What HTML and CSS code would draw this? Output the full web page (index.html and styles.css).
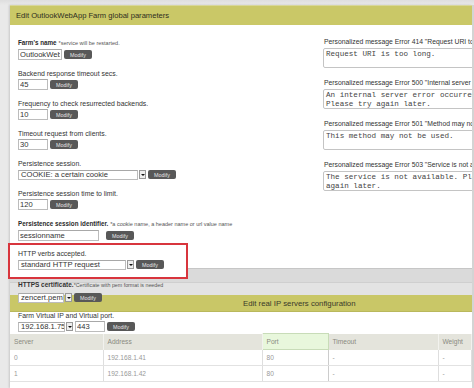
FILE: index.html
```html
<!DOCTYPE html>
<html lang="en">
<head>
  <meta charset="UTF-8" />
  <title>Farm global parameters</title>
  <link rel="stylesheet" href="styles.css">
</head>
<body>
  <div class="screen">
    <div class="panel">
      <div class="panel-head">Edit OutlookWebApp Farm global parameters</div>

      <div class="panel-body">
        <div class="col-left">
          <div class="field">
            <label><b>Farm's name</b> <small>*service will be restarted.</small></label>
            <div class="row"><input class="w44" value="OutlookWebApp"><button>Modify</button></div>
          </div>
          <div class="field">
            <label>Backend response timeout secs.</label>
            <div class="row"><input class="w30" value="45"><button>Modify</button></div>
          </div>
          <div class="field">
            <label>Frequency to check resurrected backends.</label>
            <div class="row"><input class="w30" value="10"><button>Modify</button></div>
          </div>
          <div class="field">
            <label>Timeout request from clients.</label>
            <div class="row"><input class="w30" value="30"><button>Modify</button></div>
          </div>
          <div class="field">
            <label>Persistence session.</label>
            <div class="row">
              <span class="select w120">COOKIE: a certain cookie</span><span class="arrow"></span>
              <button>Modify</button>
            </div>
          </div>
          <div class="field">
            <label>Persistence session time to limit.</label>
            <div class="row"><input class="w30" value="120"><button>Modify</button></div>
          </div>
          <div class="field">
            <label><b>Persistence session identifier.</b> <small>*a cookie name, a header name or url value name</small></label>
            <div class="row"><input class="w81" value="sessionname"><button class="ml7">Modify</button></div>
          </div>
          <div class="field highlight">
            <label>HTTP verbs accepted.</label>
            <div class="row">
              <span class="select w108">standard HTTP request</span><span class="arrow"></span>
              <button>Modify</button>
            </div>
          </div>
        </div>

        <div class="col-right">
          <div class="msg">
            <label>Personalized message Error 414 "Request URI too long"</label>
            <textarea>Request URI is too long.</textarea>
          </div>
          <div class="msg">
            <label>Personalized message Error 500 "Internal server error"</label>
            <textarea>An internal server error occurred.
Please try again later.</textarea>
          </div>
          <div class="msg">
            <label>Personalized message Error 501 "Method may not be used"</label>
            <textarea>This method may not be used.</textarea>
          </div>
          <div class="msg">
            <label>Personalized message Error 503 "Service is not available"</label>
            <textarea>The service is not available. Please try
again later.</textarea>
          </div>
        </div>
      </div>

      <div class="band">
        <label><b>HTTPS certificate.</b><small>*Certificate with pem format is needed</small></label>
      </div>

      <div class="bar">
        <div class="row cert-row">
          <span class="select w46">zencert.pem</span><span class="arrow"></span>
          <button>Modify</button>
        </div>
        <span class="bar-title">Edit real IP servers configuration</span>
      </div>

      <div class="servers">
        <div class="field">
          <label>Farm Virtual IP and Virtual port.</label>
          <div class="row">
            <span class="select w47">192.168.1.75</span><span class="arrow"></span>
            <input class="w30 ml2" value="443"><button>Modify</button>
          </div>
        </div>
        <table>
          <tr>
            <th class="c-server">Server</th>
            <th class="c-address">Address</th>
            <th class="c-port">Port</th>
            <th class="c-timeout">Timeout</th>
            <th class="c-weight">Weight</th>
          </tr>
          <tr>
            <td>0</td><td>192.168.1.41</td><td class="c-port">80</td><td>-</td><td>-</td>
          </tr>
          <tr>
            <td>1</td><td>192.168.1.42</td><td class="c-port">80</td><td>-</td><td>-</td>
          </tr>
        </table>
      </div>
    </div>
    <div class="edge"></div>
  </div>
</body>
</html>
```

FILE: styles.css
```css
* {
  margin: 0;
  padding: 0;
  box-sizing: border-box;
}

html, body {
  overflow: hidden;
}

body {
  font-family: 'Liberation Sans', Arial, sans-serif;
  background: #e6e6e6;
  color: #333;
  height: 388px;
}

.screen {
  display: flex;
  padding: 5px 0 0 10px;
  height: 388px;
  background: linear-gradient(#dedede, #e9e9e9 5px);
}

.panel {
  width: 462px;
  background: #fff;
  box-shadow: -1px 0 2px rgba(0, 0, 0, 0.15);
}

.edge {
  width: 2px;
  background: #d4d4d4;
}

.panel-head {
  height: 20px;
  line-height: 19px;
  padding-left: 6px;
  font-size: 7.6px;
  color: #2e2e20;
  background: #cac867;
  border-top: 1px solid #d8d79a;
}

.panel-body {
  display: grid;
  grid-template-columns: 305px 1fr;
  padding: 12px 0 0 8px;
}

.col-right {
  overflow: hidden;
}

/* form fields */

.field {
  margin-bottom: 8px;
}

.field label {
  display: block;
  font-size: 6.9px;
  line-height: 11px;
  color: #333;
  white-space: nowrap;
}

.field label b {
  font-size: 6.3px;
  color: #2a2a2a;
}

small {
  font-size: 5.5px;
  color: #555;
  font-weight: normal;
}

.row {
  display: flex;
  align-items: center;
  height: 11px;
}

input {
  height: 11px;
  border: 1px solid #bcbcbc;
  border-top-color: #a8a8a8;
  font-family: 'Liberation Sans', Arial, sans-serif;
  font-size: 7.6px;
  color: #333;
  padding: 0 1px;
  overflow: hidden;
}

.w30 { width: 30px; }
.w44 { width: 44px; }
.w81 { width: 81px; }
.w46 { width: 46px; }
.w47 { width: 47px; }
.w108 { width: 108px; }
.w120 { width: 120px; }
.ml2 { margin-left: 2px; }
.ml7 { margin-left: 7px !important; }

.select {
  display: flex;
  align-items: center;
  height: 10px;
  border: 1px solid #bcbcbc;
  border-top-color: #a8a8a8;
  background: #fff;
  font-size: 7.6px;
  color: #333;
  padding: 0 2px;
  white-space: nowrap;
  overflow: hidden;
}

.arrow {
  width: 7px;
  height: 9px;
  margin-left: 1px;
  border: 1px solid #999;
  background: #eee;
  position: relative;
}

.arrow::after {
  content: "";
  position: absolute;
  left: 1px;
  top: 3px;
  border-left: 2px solid transparent;
  border-right: 2px solid transparent;
  border-top: 2px solid #111;
}

button {
  width: 28px;
  height: 9px;
  margin-left: 2px;
  border: none;
  border-radius: 2px;
  background: #585858;
  color: #e4e4e4;
  font-family: 'Liberation Sans', Arial, sans-serif;
  font-size: 5.4px;
}

.highlight {
  position: relative;
  z-index: 1;
  width: 180px;
  margin: -6px 0 -11px -10px;
  padding: 3px 0 7px 8px;
  border: 2px solid #d8353d;
  background: #fff;
}

/* personalized messages */

.msg {
  margin-bottom: 10px;
}

.msg label {
  display: block;
  font-size: 6.8px;
  line-height: 10px;
  white-space: nowrap;
  color: #333;
  padding-left: 1px;
}

.msg textarea {
  display: block;
  width: 200px;
  height: 20px;
  margin-top: 1px;
  border: 1px solid #c4c4c4;
  border-radius: 2px;
  resize: none;
  font-family: 'Liberation Mono', 'Courier New', monospace;
  font-size: 7.6px;
  line-height: 9px;
  color: #444;
  padding: 1px 2px;
  overflow: hidden;
  white-space: pre;
}

/* lower part */

.band {
  height: 27px;
  border-top: 1px solid #c6c6c6;
  background: linear-gradient(#dadada 0, #dadada 13px, #cfcfcf 13px, #cfcfcf 14px, #e3e3e3 14px);
  padding: 10px 0 0 8px;
}

.band label {
  display: block;
  font-size: 6.5px;
  line-height: 11px;
  color: #333;
  white-space: nowrap;
}

.band small {
  font-size: 5.3px;
}

.bar {
  display: flex;
  align-items: flex-start;
  height: 17px;
  padding-left: 8px;
  background: #c9c767;
  border-bottom: 1px solid #b9b85c;
}

.cert-row {
  margin-top: -3px;
}

.bar-title {
  align-self: center;
  margin-left: 141px;
  font-size: 7.8px;
  color: #3a3a2a;
}

.servers {
  padding-left: 8px;
}

.servers .field {
  margin: -2px 0 1px;
}

table {
  margin-left: -8px;
  width: 462px;
  border-collapse: collapse;
  table-layout: fixed;
  font-size: 6.6px;
}

th {
  height: 16px;
  background: #e4e4dc;
  color: #8a8a80;
  font-weight: normal;
  text-align: left;
  padding-left: 4px;
  border-right: 1px solid #f2f2ee;
}

td {
  height: 16px;
  color: #999;
  padding-left: 4px;
  border-bottom: 1px solid #e2e2e2;
  border-right: 1px solid #dedede;
}

.c-server { width: 93px; }
.c-address { width: 159px; }
.c-port { width: 66px; }
.c-timeout { width: 110px; }

th.c-port {
  background: #e8f7dc;
  border: 1px solid #c8dcb8;
}

td.c-port {
  border-left: 1px solid #ccc;
  border-right: 1px solid #ccc;
}
```
